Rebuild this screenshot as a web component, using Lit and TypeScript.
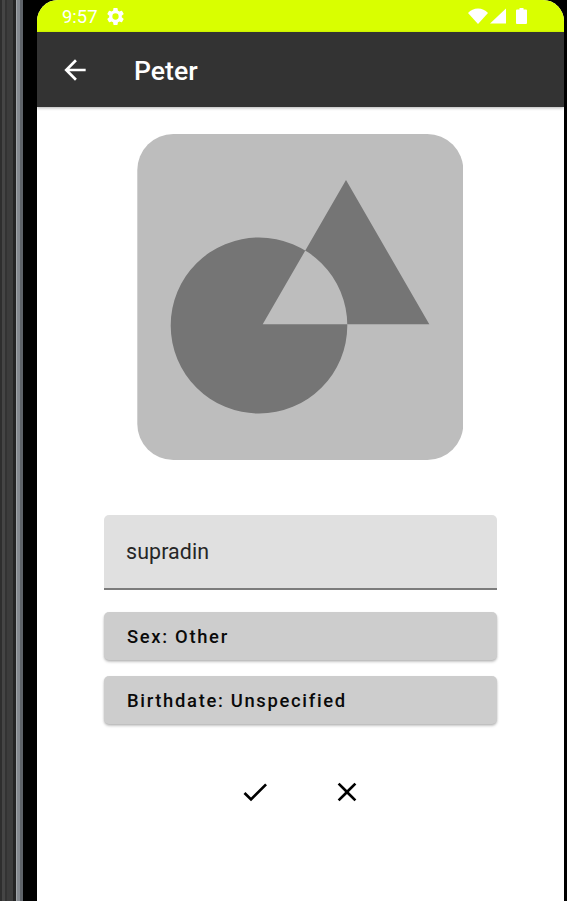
import {LitElement, html, css, svg} from 'lit';
import {customElement} from 'lit/decorators.js';

const backIcon = svg`<path d="M20 11H7.83l5.59-5.59L12 4l-8 8 8 8 1.41-1.41L7.83 13H20v-2z"/>`;
const gearIcon = svg`<path d="M19.14 12.94c.04-.3.06-.61.06-.94s-.02-.64-.07-.94l2.03-1.58a.49.49 0 0 0 .12-.61l-1.92-3.32a.49.49 0 0 0-.59-.22l-2.39.96c-.5-.38-1.03-.7-1.62-.94l-.36-2.54a.48.48 0 0 0-.48-.41h-3.84c-.24 0-.43.17-.47.41l-.36 2.54c-.59.24-1.13.57-1.62.94l-2.39-.96a.49.49 0 0 0-.59.22L2.74 8.87c-.12.21-.08.47.12.61l2.03 1.58c-.05.3-.09.63-.09.94s.02.64.07.94l-2.03 1.58a.49.49 0 0 0-.12.61l1.92 3.32c.12.22.37.29.59.22l2.39-.96c.5.38 1.03.7 1.62.94l.36 2.54c.05.24.24.41.48.41h3.84c.24 0 .44-.17.47-.41l.36-2.54c.59-.24 1.13-.56 1.62-.94l2.39.96c.22.08.47 0 .59-.22l1.92-3.32c.12-.22.07-.47-.12-.61l-2.01-1.58zM12 15.6A3.6 3.6 0 1 1 12 8.4a3.6 3.6 0 0 1 0 7.2z"/>`;
const checkIcon = svg`<path d="M9 16.17 4.83 12l-1.42 1.41L9 19 21 7l-1.41-1.41z"/>`;
const closeIcon = svg`<path d="M19 6.41 17.59 5 12 10.59 6.41 5 5 6.41 10.59 12 5 17.59 6.41 19 12 13.41 17.59 19 19 17.59 13.41 12z"/>`;

@customElement('app-root')
export class AppRoot extends LitElement {
  static styles = css`
    :host {
      display: flex;
      width: 567px;
      height: 901px;
      overflow: hidden;
      background: #000;
      font-family: Roboto, sans-serif;
    }

    .bezel {
      flex: none;
      width: 37px;
      background: linear-gradient(
        to right,
        #2e2e2e 0 2px,
        #454545 2px 5px,
        #333 5px 7px,
        #3c3c3c 7px 13px,
        #242424 13px 16px,
        #a0a4a8 16px 17px,
        #858a90 17px 20px,
        #5f646a 20px 23px,
        #000 23px
      );
    }

    .phone {
      flex: none;
      width: 527px;
      display: flex;
      flex-direction: column;
      background: #fff;
      border-radius: 21px 21px 0 0;
      overflow: hidden;
    }

    .status {
      flex: none;
      height: 32px;
      display: flex;
      align-items: center;
      padding: 0 37px 0 25px;
      background: #d9ff00;
      color: #fff;
      font-size: 18.4px;
    }

    .status .gear {
      width: 21px;
      height: 21px;
      margin-left: 8px;
      fill: #fff;
    }

    .status .right {
      margin-left: auto;
      display: flex;
      align-items: center;
    }

    .status .right svg {
      display: block;
      fill: #fff;
    }

    .status .signal {
      margin: 0 10px 0 2px;
    }

    .appbar {
      flex: none;
      height: 75px;
      display: flex;
      align-items: center;
      gap: 43px;
      padding-left: 22px;
      background: #333;
      color: #fff;
      font-size: 26.6px;
      font-weight: 500;
      box-shadow: 0 1px 3px rgba(0, 0, 0, 0.3);
      position: relative;
    }

    .appbar svg {
      width: 32px;
      height: 32px;
      fill: #fff;
    }

    .appbar span {
      margin-top: 2px;
    }

    .content {
      flex: 1;
      display: flex;
      flex-direction: column;
      align-items: center;
      padding-top: 27px;
    }

    .avatar {
      display: block;
      width: 326px;
      height: 326px;
      margin-left: -1px;
    }

    .form {
      width: 393px;
      margin-top: 55px;
      display: flex;
      flex-direction: column;
    }

    .field {
      height: 72px;
      display: flex;
      align-items: center;
      padding: 0 0 1px 22px;
      background: #e0e0e0;
      border-bottom: 2px solid #7c7c7c;
      border-radius: 5px 5px 0 0;
      color: #262626;
      font-size: 21.4px;
      letter-spacing: 0.1px;
    }

    .btn {
      height: 48px;
      display: flex;
      align-items: center;
      padding: 1px 0 0 23px;
      box-sizing: border-box;
      background: #cdcdcd;
      border-radius: 5px;
      box-shadow: 0 2px 3px rgba(0, 0, 0, 0.2), 0 1px 2px rgba(0, 0, 0, 0.12);
      color: #0a0a0a;
      font-size: 18.4px;
      font-weight: 500;
      letter-spacing: 1.68px;
    }

    .field + .btn {
      margin-top: 22px;
    }

    .btn + .btn {
      margin-top: 16px;
    }

    .actions {
      margin-top: 52px;
      display: flex;
      gap: 60px;
    }

    .actions svg {
      display: block;
      width: 32px;
      height: 32px;
    }
  `;

  render() {
    return html`
      <div class="bezel"></div>
      <div class="phone">
        <div class="status">
          <span>9:57</span>
          <svg class="gear" viewBox="0 0 24 24">${gearIcon}</svg>
          <div class="right">
            <svg width="20" height="16" viewBox="0 0 20 16"><path d="M0 5C2.800 2 6 .5 10 .5S17.200 2 20 5L10 16z"/></svg>
            <svg class="signal" width="16" height="16" viewBox="0 0 16 16"><path d="M16 .5V15.500H0z"/></svg>
            <svg width="11" height="16" viewBox="0 0 11 16"><path d="M3.500 0h4v1.500h2.500a1 1 0 0 1 1 1V15a1 1 0 0 1-1 1H1a1 1 0 0 1-1-1V2.500a1 1 0 0 1 1-1h2.500z"/></svg>
          </div>
        </div>
        <div class="appbar">
          <svg viewBox="0 0 24 24">${backIcon}</svg>
          <span>Peter</span>
        </div>
        <div class="content">
          <svg class="avatar" viewBox="0 0 326 326">
            <rect x="0.300" width="326" height="326" rx="36" fill="#bdbdbd"/>
            <path
              fill="#757575"
              fill-rule="evenodd"
              d="M33.700 191.500a88.300 88 0 1 0 176.600 0a88.300 88 0 1 0-176.600 0z M209 46 292.300 190.300H125.700z"
            />
          </svg>
          <div class="form">
            <div class="field">supradin</div>
            <div class="btn">Sex: Other</div>
            <div class="btn">Birthdate: Unspecified</div>
          </div>
          <div class="actions">
            <svg viewBox="0 0 24 24">${checkIcon}</svg>
            <svg viewBox="0 0 24 24">${closeIcon}</svg>
          </div>
        </div>
      </div>
    `;
  }
}
